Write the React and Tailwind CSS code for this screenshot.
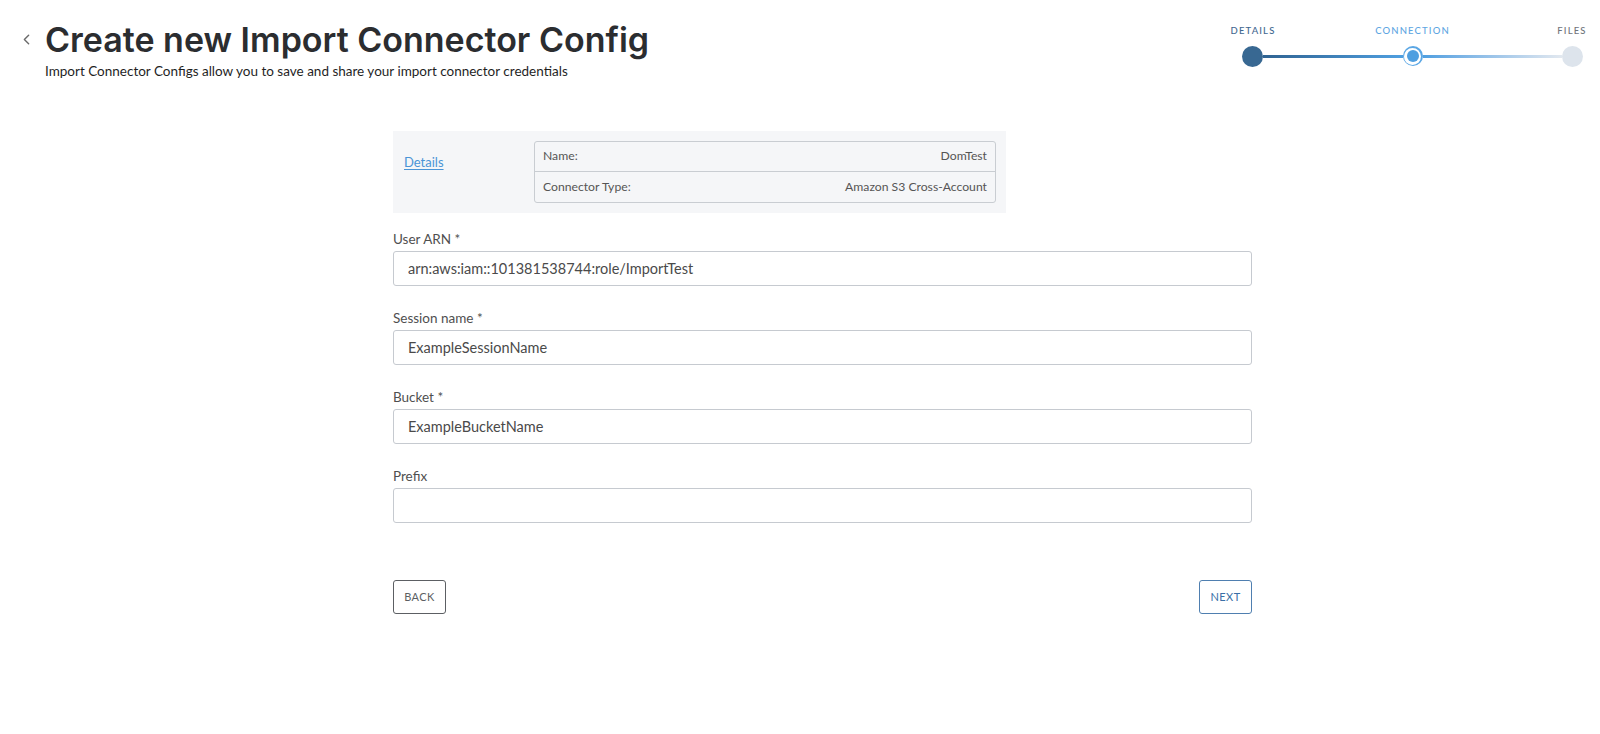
import React from 'react';
import { ChevronLeft } from 'lucide-react';

const fields = [
  { label: 'User ARN *', value: 'arn:aws:iam::101381538744:role/ImportTest' },
  { label: 'Session name *', value: 'ExampleSessionName' },
  { label: 'Bucket *', value: 'ExampleBucketName' },
  { label: 'Prefix', value: '' },
];

const Stepper = () => {
  return (
    <div className="w-[341px] mt-[26px] mr-[17px]">
      {/* Labels */}
      <div className="flex justify-between text-[9.5px] tracking-[0.12em] font-medium leading-none">
        <div className="w-[22px] flex justify-center">
          <span className="whitespace-nowrap text-[#3f6790]">DETAILS</span>
        </div>
        <div className="w-[22px] flex justify-center">
          <span className="whitespace-nowrap text-[#5ea6e2]">CONNECTION</span>
        </div>
        <div className="w-[22px] flex justify-center">
          <span className="whitespace-nowrap text-[#6f747b]">FILES</span>
        </div>
      </div>
      {/* Track */}
      <div className="flex items-center mt-[10px]">
        <div className="w-[21px] h-[21px] rounded-full bg-[#386892] shrink-0" />
        <div className="flex-1 h-[3px] bg-gradient-to-r from-[#2f6392] to-[#4f9fe0]" />
        <div className="w-[20px] h-[20px] rounded-full bg-[#5aa6e4] shrink-0 flex items-center justify-center">
          <div className="w-[17px] h-[17px] rounded-full bg-white flex items-center justify-center">
            <div className="w-[12px] h-[12px] rounded-full bg-[#4f9fe0]" />
          </div>
        </div>
        <div className="flex-1 h-[3px] bg-gradient-to-r from-[#4f9fe0] to-[#e2e8ef]" />
        <div className="w-[21px] h-[21px] rounded-full bg-[#dde4ec] shrink-0" />
      </div>
    </div>
  );
};

const App = () => {
  return (
    <div
      className="w-[1600px] h-[734px] bg-white text-[#333]"
      style={{ fontFamily: 'Lato, "Open Sans", sans-serif' }}
    >
      {/* Header */}
      <header className="flex justify-between items-start">
        <div className="flex items-start pl-[18px] pt-[19px]">
          <ChevronLeft size={17} strokeWidth={2} className="text-[#6b6b6b] mt-[12px] mr-[10px]" />
          <div>
            <h1
              className="text-[34px] leading-[41px] font-semibold text-[#2b2d30]"
              style={{ fontFamily: 'Inter, Lato, sans-serif' }}
            >
              Create new Import Connector Config
            </h1>
            <p className="text-[13.5px] leading-[17px] text-[#1f1f1f] mt-[3px]">
              Import Connector Configs allow you to save and share your import connector credentials
            </p>
          </div>
        </div>
        <Stepper />
      </header>

      {/* Main form */}
      <main className="ml-[393px] w-[859px] mt-[51px]">
        {/* Details summary */}
        <div className="w-[613px] bg-[#f5f6f8] flex p-[10px]">
          <div className="w-[131px] pl-[1px] pt-[8px]">
            <a href="#" className="text-[13px] text-[#4a94d6] underline underline-offset-2">
              Details
            </a>
          </div>
          <div className="flex-1 border border-[#c9cdd2] rounded-[3px] text-[12.2px] text-[#555]">
            <div className="flex justify-between items-center h-[30px] px-[8px] border-b border-[#c9cdd2]">
              <span>Name:</span>
              <span>DomTest</span>
            </div>
            <div className="flex justify-between items-center h-[30px] px-[8px]">
              <span>Connector Type:</span>
              <span>Amazon S3 Cross-Account</span>
            </div>
          </div>
        </div>

        {/* Fields */}
        <div className="mt-[18px] flex flex-col gap-[24px]">
          {fields.map((f) => (
            <div key={f.label}>
              <label className="block text-[13.5px] leading-[17px] text-[#4f4f4f] mb-[3px]">
                {f.label}
              </label>
              <input
                type="text"
                defaultValue={f.value}
                className="w-full h-[35px] border border-[#c6cad0] rounded-[3px] px-[14px] text-[14.5px] text-[#4a4a4a] focus:outline-none"
              />
            </div>
          ))}
        </div>

        {/* Actions */}
        <div className="flex justify-between mt-[57px]">
          <button className="w-[53px] h-[34px] border border-[#5c5f63] rounded-[3px] text-[11px] tracking-[0.04em] text-[#5c5f63]">
            BACK
          </button>
          <button className="w-[53px] h-[34px] border border-[#4f7fb0] rounded-[3px] text-[11px] tracking-[0.04em] text-[#3a6fa6]">
            NEXT
          </button>
        </div>
      </main>
    </div>
  );
};

export default App;
